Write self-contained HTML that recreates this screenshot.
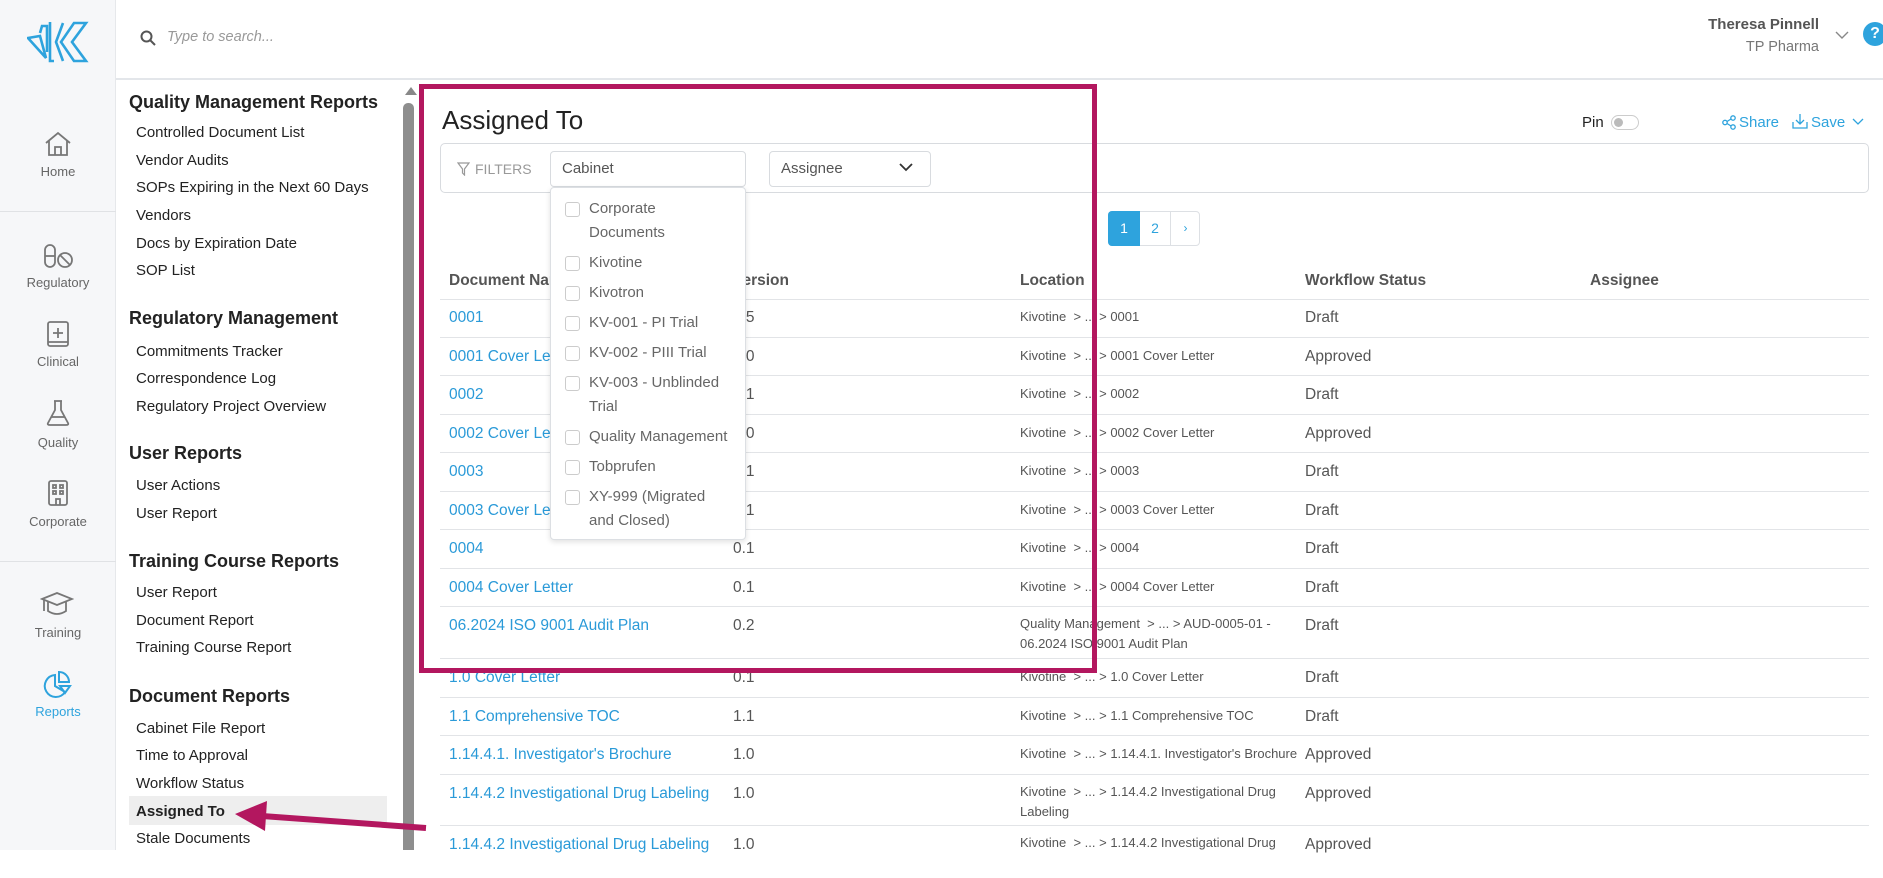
<!DOCTYPE html>
<html><head><meta charset="utf-8">
<style>
*{box-sizing:border-box;margin:0;padding:0}
body{width:1883px;height:850px;overflow:hidden;background:#fff;font-family:"Liberation Sans",Arial,sans-serif;color:#222;position:relative}
.abs{position:absolute}
.rail{left:0;top:0;width:116px;height:850px;background:#f6f7f9;border-right:1px solid #e6e8eb}
.rl{position:absolute;left:0;width:116px;text-align:center;font-size:13px;color:#666}
.ri{position:absolute;left:43px}
.hdr{left:116px;top:0;width:1767px;height:80px;border-bottom:2px solid #e3e6ea;background:#fff}
.side{left:116px;top:81px;width:304px;height:769px;background:#fff}
.sh{position:absolute;left:13px;font-size:18px;font-weight:bold;color:#222}
.si{position:absolute;left:20px;font-size:15px;color:#222}
.tbl{position:absolute;left:440px;top:281px;width:1429px}
.row{position:absolute;left:0;width:1429px;border-bottom:1.5px solid #e2e4e7}
.c{position:absolute;font-size:15.5px}
.lnk{color:#2a9ad8}
.loc{font-size:13px;color:#555;line-height:20px}
.st{color:#555;font-size:15.5px}
.dd{position:absolute;left:550px;top:187px;width:196px;height:353px;background:#fff;border:1px solid #dcdfe3;border-radius:4px;box-shadow:0 2px 6px rgba(0,0,0,.12)}
.di{position:absolute;left:38px;font-size:15px;color:#666;line-height:24px}
.cb{position:absolute;left:14px;width:15px;height:15px;border:1px solid #ccc;border-radius:3px;background:#fff}
</style></head><body>

<div class="abs rail">
  <svg class="abs" style="left:27px;top:21px" width="62" height="42" viewBox="-1 -1 62 42" fill="none" stroke="#2ea3dd" stroke-width="2.6" stroke-linejoin="miter">
    <path d="M0 16 L12 14 L18 36 Z"/>
    <path d="M12 11 L14 4 L19 4 L19 30"/>
    <path d="M22 0 V39 H26"/>
    <path d="M35 1 L28 20 L35 39"/>
    <path d="M46 1 H58 L44 20 L58 39 H46 L33 20 Z"/>
  </svg>
  <svg class="ri" style="top:130px" width="30" height="28" viewBox="0 0 30 28" fill="none" stroke="#777" stroke-width="1.8"><path d="M3 13 L15 3 L27 13"/><path d="M6 11 V25 H24 V11"/><path d="M12 25 V17 H18 V25"/></svg>
  <div class="rl" style="top:164px">Home</div>
  <div class="abs" style="left:0;top:211px;width:116px;border-top:1px solid #e0e2e5"></div>
  <svg class="ri" style="top:243px" width="32" height="26" viewBox="0 0 32 26" fill="none" stroke="#777" stroke-width="1.8"><rect x="2" y="2" width="10" height="22" rx="5"/><path d="M2 13 H12"/><circle cx="22" cy="17" r="7"/><path d="M17 12 L27 22"/></svg>
  <div class="rl" style="top:275px">Regulatory</div>
  <svg class="ri" style="left:45px;top:320px" width="26" height="28" viewBox="0 0 26 28" fill="none" stroke="#777" stroke-width="1.8"><rect x="3" y="2" width="20" height="24" rx="2"/><path d="M13 8 V18 M8 13 H18"/><path d="M3 22 H23"/></svg>
  <div class="rl" style="top:354px">Clinical</div>
  <svg class="ri" style="left:45px;top:399px" width="26" height="28" viewBox="0 0 26 28" fill="none" stroke="#777" stroke-width="1.8"><path d="M9 2 H17 M10 2 V11 L3 24 Q2 26 5 26 H21 Q24 26 23 24 L16 11 V2"/><path d="M6 18 H20"/></svg>
  <div class="rl" style="top:435px">Quality</div>
  <svg class="ri" style="left:46px;top:479px" width="24" height="28" viewBox="0 0 24 28" fill="none" stroke="#777" stroke-width="1.8"><rect x="3" y="2" width="18" height="24" rx="2"/><rect x="7" y="6" width="3" height="3"/><rect x="14" y="6" width="3" height="3"/><rect x="7" y="12" width="3" height="3"/><rect x="14" y="12" width="3" height="3"/><path d="M10 26 V20 H14 V26"/></svg>
  <div class="rl" style="top:514px">Corporate</div>
  <div class="abs" style="left:0;top:561px;width:116px;border-top:1px solid #e0e2e5"></div>
  <svg class="ri" style="left:40px;top:591px" width="34" height="26" viewBox="0 0 34 26" fill="none" stroke="#777" stroke-width="1.8"><path d="M2 8 L17 2 L32 8 L17 14 Z"/><path d="M8 11 V20 Q17 26 26 20 V11"/><path d="M4 9 V20"/></svg>
  <div class="rl" style="top:625px">Training</div>
  <svg class="ri" style="top:670px" width="30" height="28" viewBox="0 0 30 28" fill="none" stroke="#2ea3dd" stroke-width="2"><path d="M12 5 A11 11 0 1 0 22 22 L12 16 Z"/><path d="M16 2 A10 10 0 0 1 26 12 H16 Z"/><path d="M17 16 H27 L22 23 Z"/></svg>
  <div class="rl" style="top:704px;color:#2ea3dd">Reports</div>
</div>

<div class="abs hdr">
  <svg class="abs" style="left:24px;top:30px" width="16" height="16" viewBox="0 0 16 16" fill="none" stroke="#555" stroke-width="2"><circle cx="6.5" cy="6.5" r="5"/><path d="M10.5 10.5 L15 15"/></svg>
  <div class="abs" style="left:51px;top:29px;font-size:14.5px;font-style:italic;color:#999">Type to search...</div>
  <div class="abs" style="right:64px;top:16px;font-size:15px;font-weight:bold;color:#555;text-align:right">Theresa Pinnell</div>
  <div class="abs" style="right:64px;top:39px;font-size:14.5px;color:#777;text-align:right">TP Pharma</div>
  <svg class="abs" style="left:1719px;top:31px" width="14" height="9" viewBox="0 0 14 9" fill="none" stroke="#888" stroke-width="1.4"><path d="M1 1 L7 7 L13 1"/></svg>
  <div class="abs" style="left:1747px;top:22px;width:24px;height:24px;border-radius:50%;background:#2ea3dd;color:#fff;font-weight:bold;font-size:16px;text-align:center;line-height:24px">?</div>
</div>

<div class="abs side">
  <div class="sh" style="top:11px">Quality Management Reports</div>
  <div class="si" style="top:43px">Controlled Document List</div>
  <div class="si" style="top:71px">Vendor Audits</div>
  <div class="si" style="top:98px">SOPs Expiring in the Next 60 Days</div>
  <div class="si" style="top:126px">Vendors</div>
  <div class="si" style="top:154px">Docs by Expiration Date</div>
  <div class="si" style="top:181px">SOP List</div>
  <div class="sh" style="top:227px">Regulatory Management</div>
  <div class="si" style="top:262px">Commitments Tracker</div>
  <div class="si" style="top:289px">Correspondence Log</div>
  <div class="si" style="top:317px">Regulatory Project Overview</div>
  <div class="sh" style="top:362px">User Reports</div>
  <div class="si" style="top:396px">User Actions</div>
  <div class="si" style="top:424px">User Report</div>
  <div class="sh" style="top:470px">Training Course Reports</div>
  <div class="si" style="top:503px">User Report</div>
  <div class="si" style="top:531px">Document Report</div>
  <div class="si" style="top:558px">Training Course Report</div>
  <div class="sh" style="top:605px">Document Reports</div>
  <div class="si" style="top:639px">Cabinet File Report</div>
  <div class="si" style="top:666px">Time to Approval</div>
  <div class="si" style="top:694px">Workflow Status</div>
  <div class="abs" style="left:13px;top:715px;width:258px;height:29px;background:#eeeeee"></div>
  <div class="si" style="top:722px;font-weight:bold">Assigned To</div>
  <div class="si" style="top:749px">Stale Documents</div>
  <div class="abs" style="left:287px;top:0;width:12px;height:769px;background:#fff"></div>
  <div class="abs" style="left:289px;top:6px;width:0;height:0;border-left:6px solid transparent;border-right:6px solid transparent;border-bottom:8px solid #888"></div>
  <div class="abs" style="left:287px;top:22px;width:11px;height:747px;background:#8e8e8e;border-radius:5px 5px 0 0"></div>
</div>

<div class="abs" style="left:442px;top:105px;font-size:26px;color:#222">Assigned To</div>
<div class="abs" style="left:1582px;top:114px;font-size:15px;color:#222">Pin</div>
<div class="abs" style="left:1611px;top:115px;width:28px;height:15px;border:1px solid #ccc;border-radius:8px"><div style="position:absolute;left:2px;top:2px;width:9px;height:9px;border-radius:50%;background:#bbb"></div></div>
<svg class="abs" style="left:1722px;top:115px" width="14" height="15" viewBox="0 0 14 15" fill="none" stroke="#2ea3dd" stroke-width="1.3"><circle cx="3" cy="7.5" r="2.2"/><circle cx="11" cy="3" r="2.2"/><circle cx="11" cy="12" r="2.2"/><path d="M5 6.5 L9 4 M5 8.5 L9 11"/></svg>
<div class="abs" style="left:1739px;top:114px;font-size:15px;color:#2ea3dd">Share</div>
<svg class="abs" style="left:1792px;top:113px" width="16" height="16" viewBox="0 0 16 16" fill="none" stroke="#2ea3dd" stroke-width="1.3"><path d="M1 9 V15 H15 V9"/><path d="M8 1 V11 M4 7 L8 11 L12 7"/></svg>
<div class="abs" style="left:1811px;top:114px;font-size:15px;color:#2ea3dd">Save</div>
<svg class="abs" style="left:1852px;top:118px" width="12" height="8" viewBox="0 0 12 8" fill="none" stroke="#2ea3dd" stroke-width="1.3"><path d="M1 1 L6 6 L11 1"/></svg>

<div class="abs" style="left:440px;top:143px;width:1429px;height:50px;border:1px solid #d8dbdf;border-radius:5px"></div>
<svg class="abs" style="left:457px;top:162px" width="13" height="14" viewBox="0 0 13 14" fill="none" stroke="#999" stroke-width="1.2"><path d="M1 1 H12 L7.5 7 V13 L5.5 11 V7 Z"/></svg>
<div class="abs" style="left:475px;top:161px;font-size:14px;color:#999">FILTERS</div>
<div class="abs" style="left:550px;top:151px;width:196px;height:36px;border:1px solid #d8dbdf;border-radius:4px;background:#fff"></div>
<div class="abs" style="left:562px;top:160px;font-size:15px;color:#555">Cabinet</div>
<div class="abs" style="left:769px;top:151px;width:162px;height:36px;border:1px solid #d8dbdf;border-radius:4px"></div>
<div class="abs" style="left:781px;top:160px;font-size:15px;color:#555">Assignee</div>
<svg class="abs" style="left:899px;top:163px" width="14" height="9" viewBox="0 0 14 9" fill="none" stroke="#333" stroke-width="1.8"><path d="M1 1 L7 7 L13 1"/></svg>

<div class="abs" style="left:1108px;top:211px;width:92px;height:35px;border:1px solid #dde0e4;border-radius:4px"></div>
<div class="abs" style="left:1108px;top:211px;width:32px;height:35px;background:#2ea3dd;border-radius:4px 0 0 4px;color:#fff;font-size:14px;text-align:center;line-height:35px">1</div>
<div class="abs" style="left:1140px;top:211px;width:31px;height:35px;border-right:1px solid #dde0e4;color:#2ea3dd;font-size:14px;text-align:center;line-height:35px">2</div>
<div class="abs" style="left:1171px;top:211px;width:29px;height:35px;color:#2ea3dd;font-size:12px;text-align:center;line-height:35px">›</div>

<div class="tbl">
  <div class="c" style="left:9px;top:-9px;font-weight:bold;color:#555">Document Name</div>
  <div class="c" style="left:293px;top:-9px;font-weight:bold;color:#555">Version</div>
  <div class="c" style="left:580px;top:-9px;font-weight:bold;color:#555">Location</div>
  <div class="c" style="left:865px;top:-9px;font-weight:bold;color:#555">Workflow Status</div>
  <div class="c" style="left:1150px;top:-9px;font-weight:bold;color:#555">Assignee</div>
</div>
<div class="abs" style="left:440px;top:299px;width:1429px;border-top:1.5px solid #e2e4e7"></div>

<div class="abs" style="left:440px;top:299px;width:1429px;height:551px">
  <div class="row" style="top:0;height:38.5px"><div class="c lnk" style="left:9px;top:10px">0001</div><div class="c st" style="left:293px;top:10px">1.5</div><div class="c loc" style="left:580px;top:8px">Kivotine &nbsp;&gt; ... &gt; 0001</div><div class="c st" style="left:865px;top:10px">Draft</div></div>
  <div class="row" style="top:38.5px;height:38.5px"><div class="c lnk" style="left:9px;top:10px">0001 Cover Letter</div><div class="c st" style="left:293px;top:10px">1.0</div><div class="c loc" style="left:580px;top:8px">Kivotine &nbsp;&gt; ... &gt; 0001 Cover Letter</div><div class="c st" style="left:865px;top:10px">Approved</div></div>
  <div class="row" style="top:77px;height:38.5px"><div class="c lnk" style="left:9px;top:10px">0002</div><div class="c st" style="left:293px;top:10px">1.1</div><div class="c loc" style="left:580px;top:8px">Kivotine &nbsp;&gt; ... &gt; 0002</div><div class="c st" style="left:865px;top:10px">Draft</div></div>
  <div class="row" style="top:115.5px;height:38.5px"><div class="c lnk" style="left:9px;top:10px">0002 Cover Letter</div><div class="c st" style="left:293px;top:10px">1.0</div><div class="c loc" style="left:580px;top:8px">Kivotine &nbsp;&gt; ... &gt; 0002 Cover Letter</div><div class="c st" style="left:865px;top:10px">Approved</div></div>
  <div class="row" style="top:154px;height:38.5px"><div class="c lnk" style="left:9px;top:10px">0003</div><div class="c st" style="left:293px;top:10px">1.1</div><div class="c loc" style="left:580px;top:8px">Kivotine &nbsp;&gt; ... &gt; 0003</div><div class="c st" style="left:865px;top:10px">Draft</div></div>
  <div class="row" style="top:192.5px;height:38.5px"><div class="c lnk" style="left:9px;top:10px">0003 Cover Letter</div><div class="c st" style="left:293px;top:10px">1.1</div><div class="c loc" style="left:580px;top:8px">Kivotine &nbsp;&gt; ... &gt; 0003 Cover Letter</div><div class="c st" style="left:865px;top:10px">Draft</div></div>
  <div class="row" style="top:231px;height:38.5px"><div class="c lnk" style="left:9px;top:10px">0004</div><div class="c st" style="left:293px;top:10px">0.1</div><div class="c loc" style="left:580px;top:8px">Kivotine &nbsp;&gt; ... &gt; 0004</div><div class="c st" style="left:865px;top:10px">Draft</div></div>
  <div class="row" style="top:269.5px;height:38.5px"><div class="c lnk" style="left:9px;top:10px">0004 Cover Letter</div><div class="c st" style="left:293px;top:10px">0.1</div><div class="c loc" style="left:580px;top:8px">Kivotine &nbsp;&gt; ... &gt; 0004 Cover Letter</div><div class="c st" style="left:865px;top:10px">Draft</div></div>
  <div class="row" style="top:308px;height:52px"><div class="c lnk" style="left:9px;top:10px">06.2024 ISO 9001 Audit Plan</div><div class="c st" style="left:293px;top:10px">0.2</div><div class="c loc" style="left:580px;top:7px">Quality Management &nbsp;&gt; ... &gt; AUD-0005-01 -<br>06.2024 ISO 9001 Audit Plan</div><div class="c st" style="left:865px;top:10px">Draft</div></div>
  <div class="row" style="top:360px;height:38.5px"><div class="c lnk" style="left:9px;top:10px">1.0 Cover Letter</div><div class="c st" style="left:293px;top:10px">0.1</div><div class="c loc" style="left:580px;top:8px">Kivotine &nbsp;&gt; ... &gt; 1.0 Cover Letter</div><div class="c st" style="left:865px;top:10px">Draft</div></div>
  <div class="row" style="top:398.5px;height:38.5px"><div class="c lnk" style="left:9px;top:10px">1.1 Comprehensive TOC</div><div class="c st" style="left:293px;top:10px">1.1</div><div class="c loc" style="left:580px;top:8px">Kivotine &nbsp;&gt; ... &gt; 1.1 Comprehensive TOC</div><div class="c st" style="left:865px;top:10px">Draft</div></div>
  <div class="row" style="top:437px;height:38.5px"><div class="c lnk" style="left:9px;top:10px">1.14.4.1. Investigator's Brochure</div><div class="c st" style="left:293px;top:10px">1.0</div><div class="c loc" style="left:580px;top:8px">Kivotine &nbsp;&gt; ... &gt; 1.14.4.1. Investigator's Brochure</div><div class="c st" style="left:865px;top:10px">Approved</div></div>
  <div class="row" style="top:475.5px;height:51.5px"><div class="c lnk" style="left:9px;top:10px">1.14.4.2 Investigational Drug Labeling</div><div class="c st" style="left:293px;top:10px">1.0</div><div class="c loc" style="left:580px;top:7px">Kivotine &nbsp;&gt; ... &gt; 1.14.4.2 Investigational Drug<br>Labeling</div><div class="c st" style="left:865px;top:10px">Approved</div></div>
  <div class="row" style="top:527px;height:52px;border:none"><div class="c lnk" style="left:9px;top:10px">1.14.4.2 Investigational Drug Labeling</div><div class="c st" style="left:293px;top:10px">1.0</div><div class="c loc" style="left:580px;top:7px">Kivotine &nbsp;&gt; ... &gt; 1.14.4.2 Investigational Drug</div><div class="c st" style="left:865px;top:10px">Approved</div></div>
</div>

<div class="dd">
  <div class="cb" style="top:14px"></div><div class="di" style="top:9px">Corporate<br>Documents</div>
  <div class="cb" style="top:68px"></div><div class="di" style="top:63px">Kivotine</div>
  <div class="cb" style="top:98px"></div><div class="di" style="top:93px">Kivotron</div>
  <div class="cb" style="top:128px"></div><div class="di" style="top:123px">KV-001 - PI Trial</div>
  <div class="cb" style="top:158px"></div><div class="di" style="top:153px">KV-002 - PIII Trial</div>
  <div class="cb" style="top:188px"></div><div class="di" style="top:183px">KV-003 - Unblinded<br>Trial</div>
  <div class="cb" style="top:242px"></div><div class="di" style="top:237px">Quality Management</div>
  <div class="cb" style="top:272px"></div><div class="di" style="top:267px">Tobprufen</div>
  <div class="cb" style="top:302px"></div><div class="di" style="top:297px">XY-999 (Migrated<br>and Closed)</div>
</div>

<div class="abs" style="left:419px;top:84px;width:678px;height:589px;border:5px solid #b3175f"></div>

<svg class="abs" style="left:0;top:0" width="1883" height="850" viewBox="0 0 1883 850">
  <path d="M426 828 L262 816" stroke="#b3175f" stroke-width="6" fill="none"/>
  <path d="M235 814 L267 801 L265 831 Z" fill="#b3175f"/>
</svg>
</body></html>
